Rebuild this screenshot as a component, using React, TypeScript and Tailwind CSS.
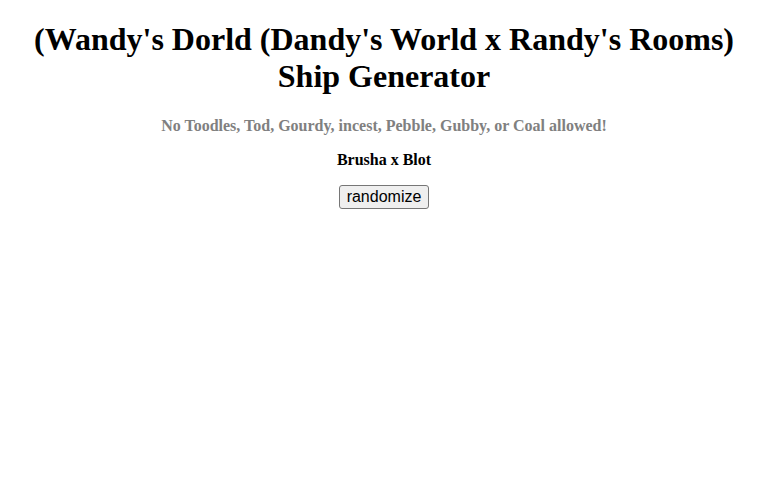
import { useState } from "react";

const ships = ["Brusha x Blot"];

export default function App() {
  const [ship, setShip] = useState(ships[0]);

  return (
    <div className="min-h-[480px] bg-white px-2 text-center font-['Liberation_Serif',serif] text-black">
      <h1 className="pt-[21px] text-[32px] font-bold leading-[37px]">
        (Wandy's Dorld (Dandy's World x Randy's Rooms) Ship Generator
      </h1>
      <h4 className="mt-[22px] text-base font-bold leading-[18px] text-[#808080]">
        No Toodles, Tod, Gourdy, incest, Pebble, Gubby, or Coal allowed!
      </h4>
      <p className="mt-[16px] text-base font-bold leading-[18px]">{ship}</p>
      <div className="mt-[16px]">
        <button
          onClick={() => setShip(ships[Math.floor(Math.random() * ships.length)])}
          className="rounded-[3px] border border-[#767676] bg-[#efefef] px-[7px] py-[2px] font-['Liberation_Sans',sans-serif] text-base leading-[18px] text-black"
        >
          randomize
        </button>
      </div>
    </div>
  );
}
